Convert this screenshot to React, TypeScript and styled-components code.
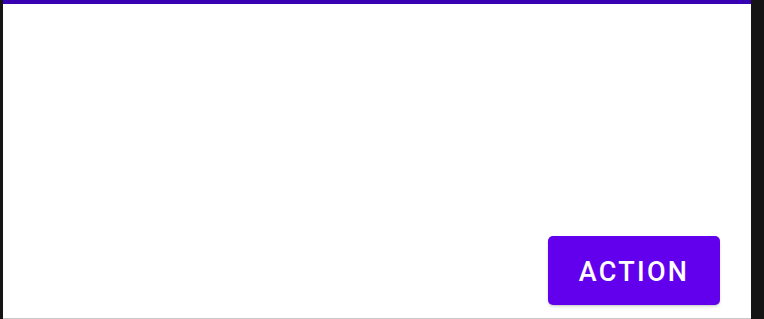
import React from "react";
import styled, { createGlobalStyle } from "styled-components";

const GlobalStyle = createGlobalStyle`
  html, body {
    margin: 0;
    padding: 0;
    background: #141414;
    font-family: Roboto, "Noto Sans", sans-serif;
  }
`;

const Screen = styled.div`
  display: flex;
  height: 319px;
  padding-left: 3px;
  box-sizing: border-box;
`;

const Panel = styled.div`
  width: 748px;
  height: 319px;
  box-sizing: border-box;
  background: #ffffff;
  border-top: 4px solid #3700b3;
  border-bottom: 1px solid #c8c8c8;
  display: flex;
  justify-content: flex-end;
  align-items: flex-end;
  padding: 0 31px 13px 0;
`;

const ActionButton = styled.button`
  width: 172px;
  height: 69px;
  padding: 2px 0 0;
  border: none;
  border-radius: 5px;
  background: #6200ee;
  color: #ffffff;
  font-family: Roboto, "Noto Sans", sans-serif;
  font-weight: 500;
  font-size: 27px;
  letter-spacing: 0.085em;
  text-transform: uppercase;
  box-shadow: 0 2px 3px rgba(0, 0, 0, 0.12), 0 1px 1px rgba(0, 0, 0, 0.08);
  cursor: pointer;
`;

const App: React.FC = () => {
  return (
    <>
      <GlobalStyle />
      <Screen>
        <Panel>
          <ActionButton>Action</ActionButton>
        </Panel>
      </Screen>
    </>
  );
};

export default App;
